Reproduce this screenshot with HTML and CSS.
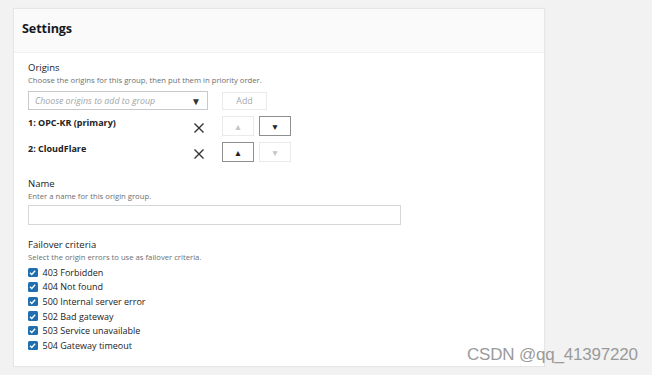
FILE: index.html
```html
<!DOCTYPE html>
<html>
<head>
<meta charset="utf-8">
<link rel="stylesheet" href="styles.css">
</head>
<body>
<div class="page">
  <div class="card">
    <div class="card-head">Settings</div>
    <div class="card-body">
      <div class="field">
        <div class="label">Origins</div>
        <div class="desc">Choose the origins for this group, then put them in priority order.</div>
        <div class="select-row">
          <div class="select"><span class="ph">Choose origins to add to group</span><span class="caret">&#9660;</span></div>
          <div class="btn add">Add</div>
        </div>
        <div class="origin">
          <span class="oname">1: OPC-KR (primary)</span>
          <svg class="x" viewBox="0 0 12 12" width="12" height="12"><path d="M1.5 1.5L10.5 10.5M10.5 1.5L1.5 10.5" stroke="#333" stroke-width="1.4" fill="none"/></svg>
          <div class="btn arrow off">&#9650;</div>
          <div class="btn arrow on">&#9660;</div>
        </div>
        <div class="origin">
          <span class="oname">2: CloudFlare</span>
          <svg class="x" viewBox="0 0 12 12" width="12" height="12"><path d="M1.5 1.5L10.5 10.5M10.5 1.5L1.5 10.5" stroke="#333" stroke-width="1.4" fill="none"/></svg>
          <div class="btn arrow on">&#9650;</div>
          <div class="btn arrow off">&#9660;</div>
        </div>
      </div>
      <div class="field name-field">
        <div class="label">Name</div>
        <div class="desc">Enter a name for this origin group.</div>
        <div class="input"></div>
      </div>
      <div class="field fail-field">
        <div class="label">Failover criteria</div>
        <div class="desc">Select the origin errors to use as failover criteria.</div>
        <ul class="checks">
          <li><span class="cb"><svg viewBox="0 0 10 10" width="10" height="10"><path d="M2.2 5.2L4.2 7.2L7.9 3" stroke="#fff" stroke-width="1.5" fill="none"/></svg></span>403 Forbidden</li>
          <li><span class="cb"><svg viewBox="0 0 10 10" width="10" height="10"><path d="M2.2 5.2L4.2 7.2L7.9 3" stroke="#fff" stroke-width="1.5" fill="none"/></svg></span>404 Not found</li>
          <li><span class="cb"><svg viewBox="0 0 10 10" width="10" height="10"><path d="M2.2 5.2L4.2 7.2L7.9 3" stroke="#fff" stroke-width="1.5" fill="none"/></svg></span>500 Internal server error</li>
          <li><span class="cb"><svg viewBox="0 0 10 10" width="10" height="10"><path d="M2.2 5.2L4.2 7.2L7.9 3" stroke="#fff" stroke-width="1.5" fill="none"/></svg></span>502 Bad gateway</li>
          <li><span class="cb"><svg viewBox="0 0 10 10" width="10" height="10"><path d="M2.2 5.2L4.2 7.2L7.9 3" stroke="#fff" stroke-width="1.5" fill="none"/></svg></span>503 Service unavailable</li>
          <li><span class="cb"><svg viewBox="0 0 10 10" width="10" height="10"><path d="M2.2 5.2L4.2 7.2L7.9 3" stroke="#fff" stroke-width="1.5" fill="none"/></svg></span>504 Gateway timeout</li>
        </ul>
      </div>
    </div>
  </div>
  <div class="watermark">CSDN @qq_41397220</div>
</div>
</body>
</html>
```
FILE: styles.css
```css
html, body {
  margin: 0;
  padding: 0;
  background: #f2f2f2;
  font-family: "Open Sans", "Liberation Sans", sans-serif;
  color: #16191f;
}
.page {
  width: 652px;
  height: 375px;
  position: relative;
  padding: 9px 0 0 14px;
  box-sizing: border-box;
}
.card {
  width: 530px;
  height: 357px;
  background: #fff;
  box-shadow: 0 0 1px 1px #e6e6e6;
  box-sizing: border-box;
}
.card-head {
  height: 44px;
  background: #fafafa;
  border-bottom: 1px solid #f0f0f0;
  box-sizing: border-box;
  padding: 10px 0 0 8px;
  font-weight: 700;
  font-size: 12.6px;
  letter-spacing: -0.1px;
  line-height: 20px;
  color: #16191f;
}
.card-body {
  padding: 8px 0 0 14px;
}
.label {
  font-size: 9.5px;
  line-height: 14px;
  color: #222;
}
.desc {
  font-size: 7.7px;
  line-height: 11px;
  color: #6b6f73;
}
.select-row {
  display: flex;
  align-items: center;
  gap: 14px;
  margin-top: 5px;
  height: 19px;
}
.select {
  width: 180px;
  height: 19px;
  border: 1px solid #c7c9cc;
  box-sizing: border-box;
  display: flex;
  align-items: center;
  justify-content: space-between;
  padding: 0 6px 0 6px;
  font-size: 8.8px;
}
.ph {
  font-style: italic;
  color: #a0a4a8;
}
.caret {
  font-size: 10px;
  color: #333;
}
.btn {
  box-sizing: border-box;
  display: flex;
  align-items: center;
  justify-content: center;
  border: 1px solid #eaeaea;
  background: #fff;
}
.add {
  width: 45px;
  height: 18px;
  font-size: 8.8px;
  color: #a7aaad;
}
.origin {
  display: flex;
  align-items: center;
  height: 20px;
  margin-top: 6px;
}
.oname {
  width: 165px;
  font-weight: 700;
  font-size: 9px;
  color: #222;
  align-self: flex-start;
  line-height: 14px;
}
.x {
  margin-right: 17px;
  margin-top: 3px;
}
.arrow {
  width: 32px;
  height: 20px;
  font-size: 8.5px;
  margin-right: 5px;
}
.arrow.on {
  border: 1px solid #8c8f92;
  color: #222;
}
.arrow.off {
  color: #c4c6c8;
}
.name-field {
  margin-top: 15px;
}
.input {
  width: 373px;
  height: 20px;
  border: 1px solid #d5d7d9;
  box-sizing: border-box;
  margin-top: 3px;
}
.fail-field {
  margin-top: 13px;
}
.checks {
  list-style: none;
  margin: 2px 0 0 0;
  padding: 0;
}
.checks li {
  display: flex;
  align-items: center;
  height: 14.6px;
  font-size: 9px;
  color: #222;
}
.cb {
  width: 9.5px;
  height: 9.5px;
  background: #1f6fb0;
  border-radius: 1.5px;
  margin-right: 5px;
  display: flex;
  align-items: center;
  justify-content: center;
}
.cb svg {
  width: 9px;
  height: 9px;
}
.watermark {
  position: absolute;
  left: 467px;
  top: 345px;
  font-family: "Liberation Sans", Arial, sans-serif;
  font-size: 17px;
  color: #9a9a9a;
  letter-spacing: -0.2px;
}
```
